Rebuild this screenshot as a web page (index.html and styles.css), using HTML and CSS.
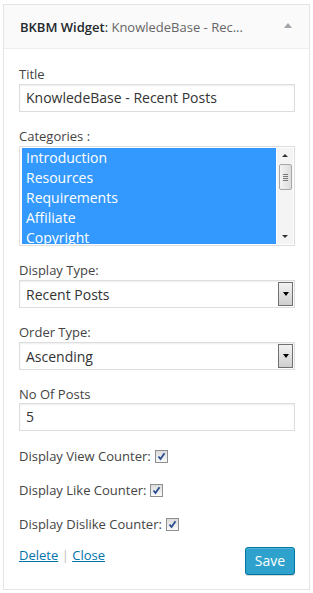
FILE: index.html
```html
<!DOCTYPE html>
<html lang="en">
<head>
  <meta charset="UTF-8">
  <title>BKBM Widget</title>
  <meta name="viewport" content="width=device-width, initial-scale=1.0">
  <link rel="stylesheet" href="styles.css">
</head>
<body>
  <div class="widget">
    <div class="widget-top">
      <h3 class="widget-title"><b>BKBM Widget</b>: <span class="in-title">KnowledeBase - Rec...</span></h3>
      <span class="toggle"></span>
    </div>
    <div class="widget-inside">
      <div class="field">
        <label>Title</label>
        <div class="input">KnowledeBase - Recent Posts</div>
      </div>

      <div class="field">
        <label>Categories :</label>
        <div class="listbox">
          <div class="options">
            <div class="option">Introduction</div>
            <div class="option">Resources</div>
            <div class="option">Requirements</div>
            <div class="option">Affiliate</div>
            <div class="option">Copyright</div>
          </div>
          <div class="scrollbar">
            <span class="arr up"></span>
            <span class="thumb"><i></i><i></i><i></i><i></i></span>
            <span class="arr down"></span>
          </div>
        </div>
      </div>

      <div class="field">
        <label>Display Type:</label>
        <div class="select">
          <span>Recent Posts</span>
          <span class="drop"></span>
        </div>
      </div>

      <div class="field">
        <label>Order Type:</label>
        <div class="select">
          <span>Ascending</span>
          <span class="drop"></span>
        </div>
      </div>

      <div class="field posts">
        <label>No Of Posts</label>
        <div class="input">5</div>
      </div>

      <div class="check-row">Display View Counter: <span class="checkbox"><svg width="9" height="9" viewBox="0 0 9 9"><path d="M1.5 4.5 L3.5 7 L7.5 1.2" fill="none" stroke="#2a4d8f" stroke-width="1.8"/></svg></span></div>
      <div class="check-row">Display Like Counter: <span class="checkbox"><svg width="9" height="9" viewBox="0 0 9 9"><path d="M1.5 4.5 L3.5 7 L7.5 1.2" fill="none" stroke="#2a4d8f" stroke-width="1.8"/></svg></span></div>
      <div class="check-row">Display Dislike Counter: <span class="checkbox"><svg width="9" height="9" viewBox="0 0 9 9"><path d="M1.5 4.5 L3.5 7 L7.5 1.2" fill="none" stroke="#2a4d8f" stroke-width="1.8"/></svg></span></div>

      <div class="actions">
        <div class="links"><a href="#">Delete</a> <span class="sep">|</span> <a href="#">Close</a></div>
        <button class="save">Save</button>
      </div>
    </div>
  </div>
</body>
</html>
```

FILE: styles.css
```css
body {
  margin: 0;
  background: #fff;
  font-family: "Open Sans", "Noto Sans", sans-serif;
  font-size: 13px;
  color: #444;
}
.widget {
  margin: 4px 3px 0;
  border: 1px solid #e5e5e5;
  box-shadow: 0 1px 1px rgba(0,0,0,0.04);
  background: #fff;
}
.widget-top {
  height: 43px;
  display: flex;
  align-items: center;
  justify-content: space-between;
  padding: 0 17px 0 16px;
  background: #fafafa;
  border-bottom: 1px solid #eee;
}
.widget-title {
  margin: 0;
  font-size: 13px;
  font-weight: 400;
  color: #23282d;
  white-space: nowrap;
}
.widget-title b {
  font-weight: 600;
}
.in-title {
  color: #666;
}
.toggle {
  width: 0;
  height: 0;
  border-left: 4px solid transparent;
  border-right: 4px solid transparent;
  border-bottom: 5px solid #a0a5aa;
  margin-top: -2px;
}
.widget-inside {
  padding: 16px 14px 14px 15px;
}
.field {
  margin-bottom: 15px;
}
.field label {
  display: block;
  line-height: 18px;
  margin-bottom: 1px;
}
.field.posts label {
  margin-bottom: 0;
}
.input {
  height: 26px;
  line-height: 26px;
  border: 1px solid #ddd;
  box-shadow: inset 0 1px 2px rgba(0,0,0,0.07);
  padding: 0 6px;
  font-size: 14px;
  color: #333;
}
.listbox {
  height: 96px;
  border: 1px solid #ddd;
  padding: 1px;
  display: flex;
  overflow: hidden;
}
.options {
  flex: 1;
  padding-left: 1px;
  overflow: hidden;
}
.option {
  background: #3399ff;
  color: #fff;
  font-size: 14px;
  line-height: 20px;
  height: 20px;
  padding-left: 4px;
}
.scrollbar {
  width: 16px;
  margin-left: 1px;
  background: #f4f4f4;
  display: flex;
  flex-direction: column;
  align-items: center;
}
.arr {
  width: 0;
  height: 0;
  border-left: 3px solid transparent;
  border-right: 3px solid transparent;
}
.arr.up {
  border-bottom: 3px solid #333;
  margin-top: 6px;
}
.arr.down {
  border-top: 3px solid #333;
  margin-top: auto;
  margin-bottom: 6px;
}
.thumb {
  width: 13px;
  height: 26px;
  margin-top: 7px;
  border: 1px solid #a8a8a8;
  border-radius: 2px;
  background: linear-gradient(to right, #f3f3f3, #dcdcdc);
  display: flex;
  flex-direction: column;
  align-items: center;
  justify-content: center;
  gap: 1px;
  box-sizing: border-box;
}
.thumb i {
  display: block;
  width: 5px;
  height: 1px;
  background: #777;
}
.select {
  height: 26px;
  border: 1px solid #ddd;
  display: flex;
  align-items: center;
  justify-content: space-between;
  padding: 0 1px 0 6px;
  font-size: 14px;
  color: #333;
  box-shadow: inset 0 1px 2px rgba(0,0,0,0.07);
}
.drop {
  width: 15px;
  height: 24px;
  box-sizing: border-box;
  border: 1px solid #707070;
  background: linear-gradient(to bottom, #f2f2f2, #cfcfcf);
  display: flex;
  align-items: center;
  justify-content: center;
}
.drop::after {
  content: "";
  width: 0;
  height: 0;
  border-left: 3px solid transparent;
  border-right: 3px solid transparent;
  border-top: 4px solid #000;
}
.check-row {
  line-height: 18px;
  margin-top: 16px;
  display: flex;
  align-items: center;
  gap: 4px;
}
.check-row:last-of-type {
  margin-top: 15px;
}
.checkbox {
  width: 13px;
  height: 13px;
  box-sizing: border-box;
  border: 1px solid #8e8f8f;
  background: linear-gradient(to bottom, #dcdcdc, #fafafa);
  display: flex;
  align-items: center;
  justify-content: center;
}
.actions {
  display: flex;
  justify-content: space-between;
  align-items: flex-start;
  margin-top: 13px;
}
.links {
  line-height: 18px;
}
.links a {
  color: #0073aa;
}
.sep {
  color: #bbb;
}
.save {
  margin-top: 1px;
  height: 28px;
  width: 50px;
  padding: 0;
  background: #2ea2cc;
  border: 1px solid #0074a2;
  border-radius: 3px;
  box-shadow: inset 0 1px 0 rgba(120,200,230,0.5), 0 1px 0 rgba(0,0,0,0.15);
  color: #fff;
  font-family: "Open Sans", "Noto Sans", sans-serif;
  font-size: 14px;
  line-height: 26px;
}
```
